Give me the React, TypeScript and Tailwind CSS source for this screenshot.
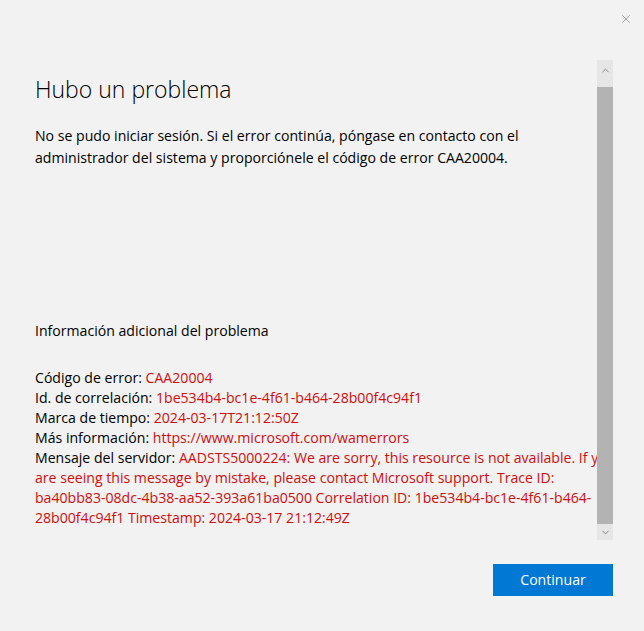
import { X, ChevronUp, ChevronDown } from 'lucide-react'

const red = 'text-[#d00d0d]'

export default function App() {
  return (
    <div className="w-[644px] h-[631px] bg-[#f2f2f2] flex flex-col relative text-black" style={{ fontFamily: '"Open Sans", "Noto Sans", sans-serif' }}>
      <button className="absolute top-[12px] right-[11px] text-[#8a8a8a]">
        <X size={14} strokeWidth={1.3} />
      </button>

      <div className="h-[60px]" />

      <div className="flex h-[480px]">
        <div className="flex-1 overflow-hidden pl-[35px] pt-[12px]">
          <h1 className="text-[23px] leading-[34px] font-light">Hubo un problema</h1>

          <div className="mt-[19px] text-[14.1px] leading-[22px]">
            <p className="whitespace-nowrap">No se pudo iniciar sesión. Si el error continúa, póngase en contacto con el</p>
            <p className="whitespace-nowrap">administrador del sistema y proporciónele el código de error CAA20004.</p>
          </div>

          <p className="mt-[151px] text-[14.1px] leading-[22px]">Información adicional del problema</p>

          <div className="mt-[26px] text-[14.1px] leading-[20px] whitespace-nowrap">
            <p>Código de error: <span className={red}>CAA20004</span></p>
            <p>Id. de correlación: <span className={red}>1be534b4-bc1e-4f61-b464-28b00f4c94f1</span></p>
            <p>Marca de tiempo: <span className={red}>2024-03-17T21:12:50Z</span></p>
            <p>Más información: <span className={red}>https://www.microsoft.com/wamerrors</span></p>
            <p>Mensaje del servidor: <span className={red}>AADSTS5000224: We are sorry, this resource is not available. If you</span></p>
            <p className={red}>are seeing this message by mistake, please contact Microsoft support. Trace ID:</p>
            <p className={red}>ba40bb83-08dc-4b38-aa52-393a61ba0500 Correlation ID: 1be534b4-bc1e-4f61-b464-</p>
            <p className={red}>28b00f4c94f1 Timestamp: 2024-03-17 21:12:49Z</p>
          </div>
        </div>

        <div className="w-[16px] mr-[31px] flex flex-col">
          <div className="h-[27px] bg-[#e6e6e6] flex items-start justify-center pt-[5px] text-[#7a7a7a]">
            <ChevronUp size={11} strokeWidth={2} />
          </div>
          <div className="flex-1 bg-[#b3b3b3]" />
          <div className="h-[16px] bg-[#e6e6e6] flex items-center justify-center text-[#7a7a7a]">
            <ChevronDown size={11} strokeWidth={2} />
          </div>
        </div>
      </div>

      <div className="flex justify-end pr-[31px] pt-[24px]">
        <button className="w-[120px] h-[32px] bg-[#0078d4] text-white text-[14.1px]">Continuar</button>
      </div>
    </div>
  )
}
